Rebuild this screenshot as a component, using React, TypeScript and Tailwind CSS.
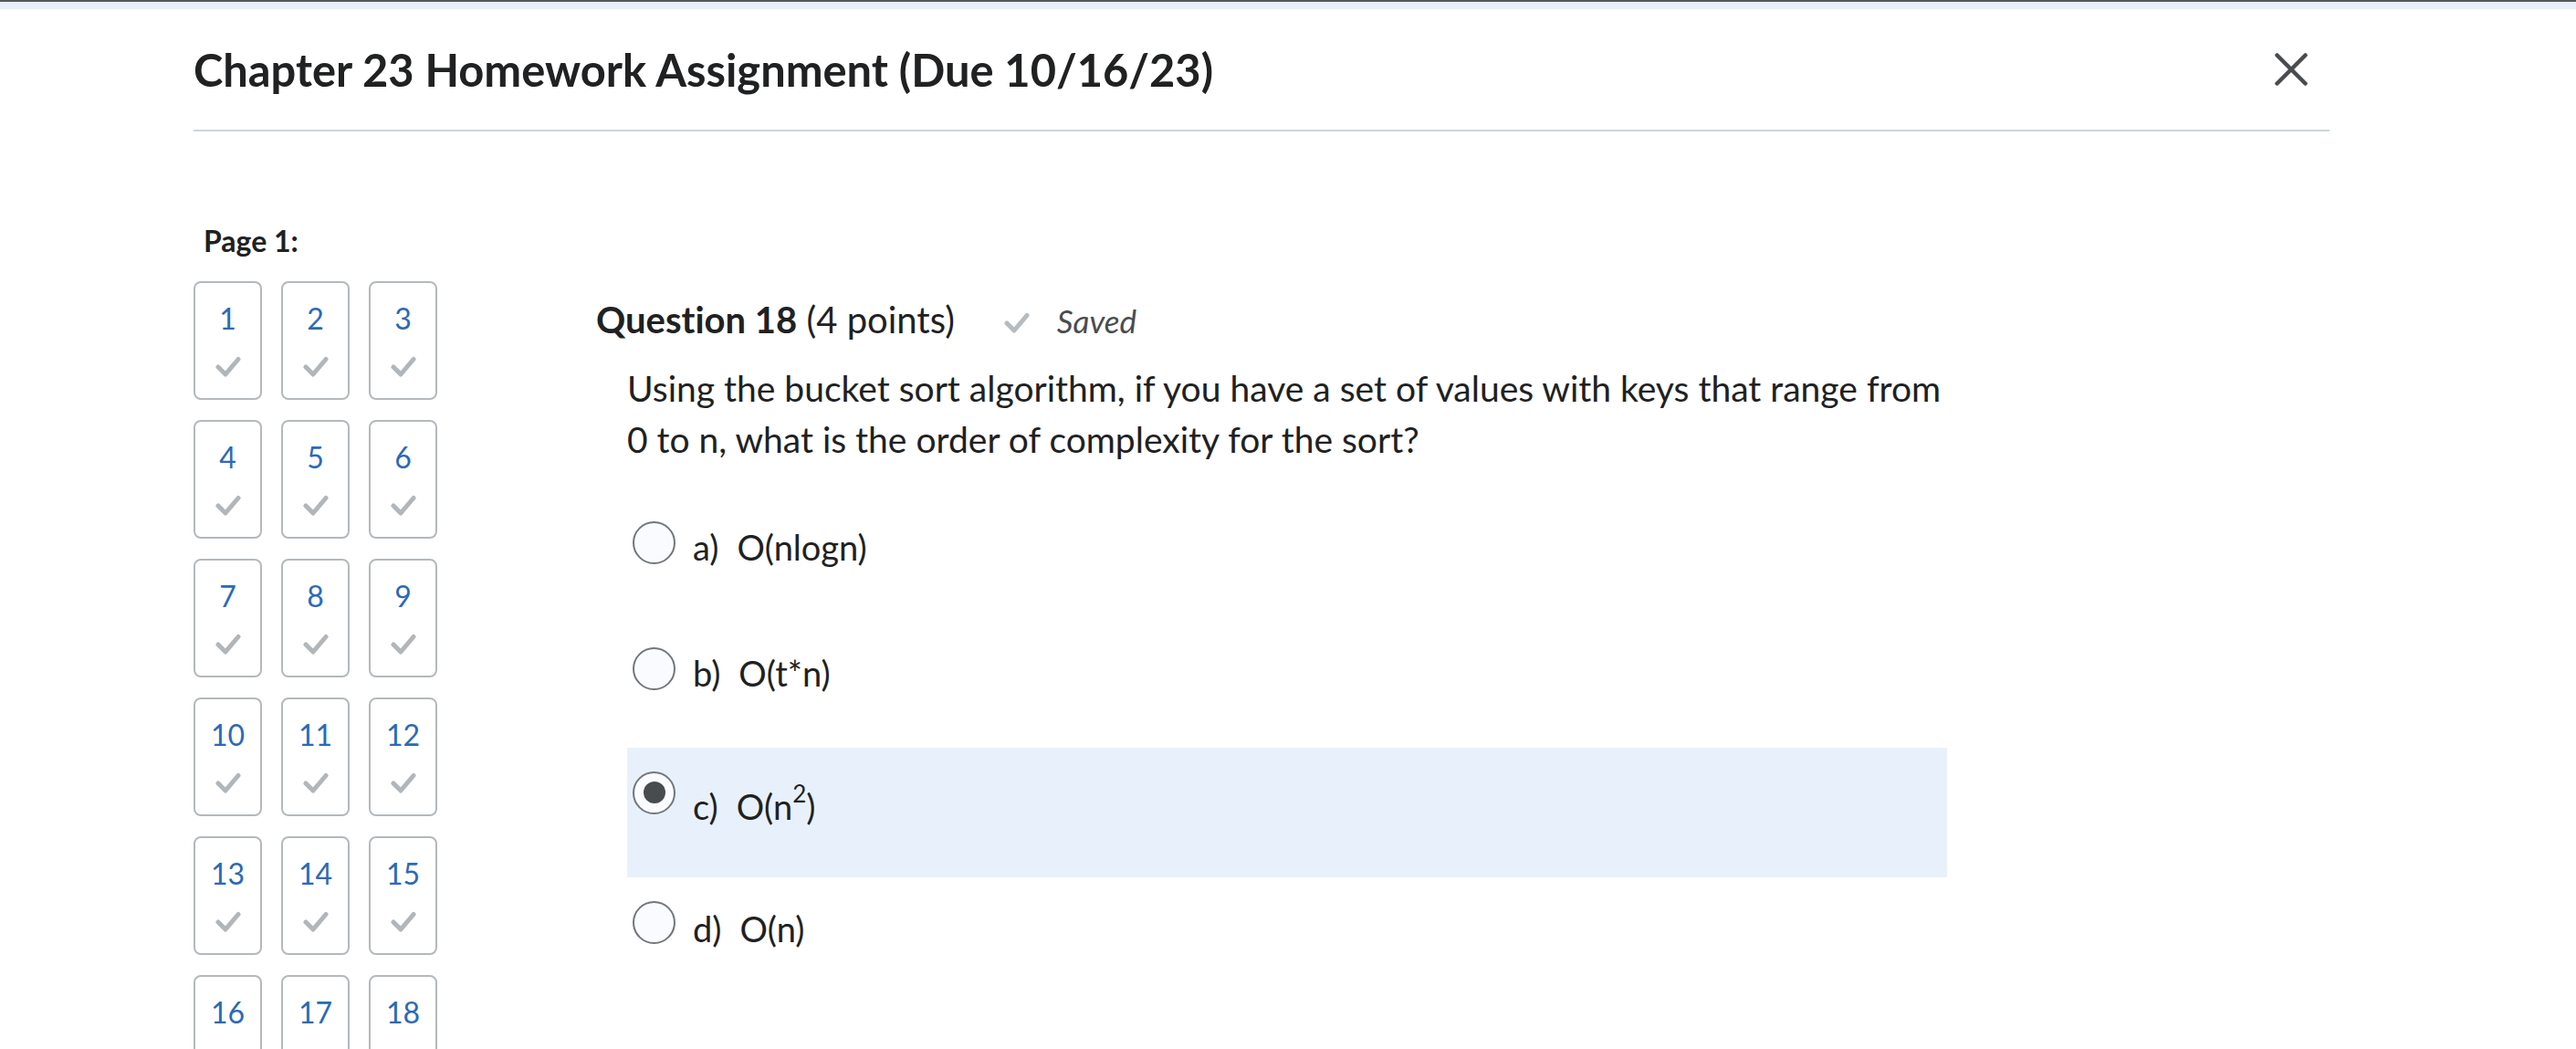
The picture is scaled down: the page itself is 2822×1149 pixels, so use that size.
import React from "react";

const Check = ({ className = "" }: { className?: string }) => (
  <svg
    className={className}
    width="28"
    height="23"
    viewBox="0 0 28 23"
    fill="none"
    stroke="currentColor"
    strokeWidth="5"
    strokeLinecap="round"
    strokeLinejoin="round"
  >
    <polyline points="3,12 11,20 25,3.5" />
  </svg>
);

const CloseIcon = () => (
  <svg
    width="36"
    height="36"
    viewBox="0 0 36 36"
    fill="none"
    stroke="currentColor"
    strokeWidth="4.5"
    strokeLinecap="round"
  >
    <line x1="2.5" y1="2.5" x2="33.5" y2="33.5" />
    <line x1="33.5" y1="2.5" x2="2.5" y2="33.5" />
  </svg>
);

const Radio = ({ checked }: { checked?: boolean }) => (
  <span className="flex h-[47px] w-[47px] shrink-0 items-center justify-center rounded-full border-2 border-[#72777b] bg-[#f9fbfe]">
    {checked && <span className="h-[24px] w-[24px] rounded-full bg-[#494c4e]" />}
  </span>
);

type Option = {
  letter: string;
  answer: React.ReactNode;
  rowClass: string;
  labelClass: string;
  checked?: boolean;
};

const options: Option[] = [
  { letter: "a)", answer: "O(nlogn)", rowClass: "h-[138px]", labelClass: "mt-[6px]" },
  { letter: "b)", answer: "O(t*n)", rowClass: "h-[136px]", labelClass: "mt-[6px]" },
  {
    letter: "c)",
    answer: (
      <>
        O(n<sup className="top-[-19px] text-[26px]">2</sup>)
      </>
    ),
    rowClass: "h-[142px] bg-[#e8f1fb]",
    labelClass: "mt-[16px]",
    checked: true,
  },
  { letter: "d)", answer: "O(n)", rowClass: "h-[140px]", labelClass: "mt-[8px]" },
];

const QuestionTile = ({ n }: { n: number }) => (
  <div className="flex h-[130px] w-[75px] flex-col items-center rounded-[8px] border-2 border-[#b3b9bd] pt-[20px]">
    <span className="text-[32px] leading-[38px] text-[#2b6ab6]">{n}</span>
    <Check className="mt-[22px] text-[#b1b6ba]" />
  </div>
);

const App = () => {
  const tiles = Array.from({ length: 18 }, (_, i) => i + 1);

  return (
    <div className="min-h-screen bg-white font-['Lato',sans-serif] text-[#202122] [font-variant-ligatures:none]">
      <div className="h-[2px] bg-[#55595d]" />
      <div className="h-[8px] bg-[#e9f0fb]" />

      <div className="ml-[212px] w-[2340px]">
        <header className="flex h-[134px] items-center justify-between border-b-2 border-[#cdd5dc]">
          <h1 className="text-[48.8px] font-bold leading-[1.2]">
            Chapter 23 Homework Assignment (Due 10/16/23)
          </h1>
          <button className="mr-[24px] text-[#494c4e]">
            <CloseIcon />
          </button>
        </header>

        <div className="flex">
          <aside className="w-[441px] shrink-0 pt-[101px]">
            <p className="pl-[11px] text-[32px] font-bold leading-[38px]">Page 1:</p>
            <div className="mt-[25px] grid grid-cols-[repeat(3,75px)] gap-x-[21px] gap-y-[22px]">
              {tiles.map((n) => (
                <QuestionTile key={n} n={n} />
              ))}
            </div>
          </aside>

          <main className="pt-[181px]">
            <div className="flex items-baseline">
              <h2 className="text-[40px] leading-[42px]">
                <span className="font-bold">Question 18</span> (4 points)
              </h2>
              <Check className="ml-[54px] text-[#b5bbbf]" />
              <span className="ml-[30px] text-[35px] italic text-[#494c4e]">Saved</span>
            </div>

            <div className="ml-[34px] w-[1446px]">
              <p className="mt-[19px] text-[39px] leading-[56px]">
                Using the bucket sort algorithm, if you have a set of values with keys that range from 0 to
                n, what is the order of complexity for the sort?
              </p>

              <div className="mt-[36px]">
                {options.map((o) => (
                  <div key={o.letter} className={`flex items-start pl-[6px] pt-[26px] ${o.rowClass}`}>
                    <Radio checked={o.checked} />
                    <div className={`ml-[19px] flex gap-[20px] text-[38px] leading-[1.2] ${o.labelClass}`}>
                      <span>{o.letter}</span>
                      <span>{o.answer}</span>
                    </div>
                  </div>
                ))}
              </div>
            </div>
          </main>
        </div>
      </div>
    </div>
  );
};

export default App;
